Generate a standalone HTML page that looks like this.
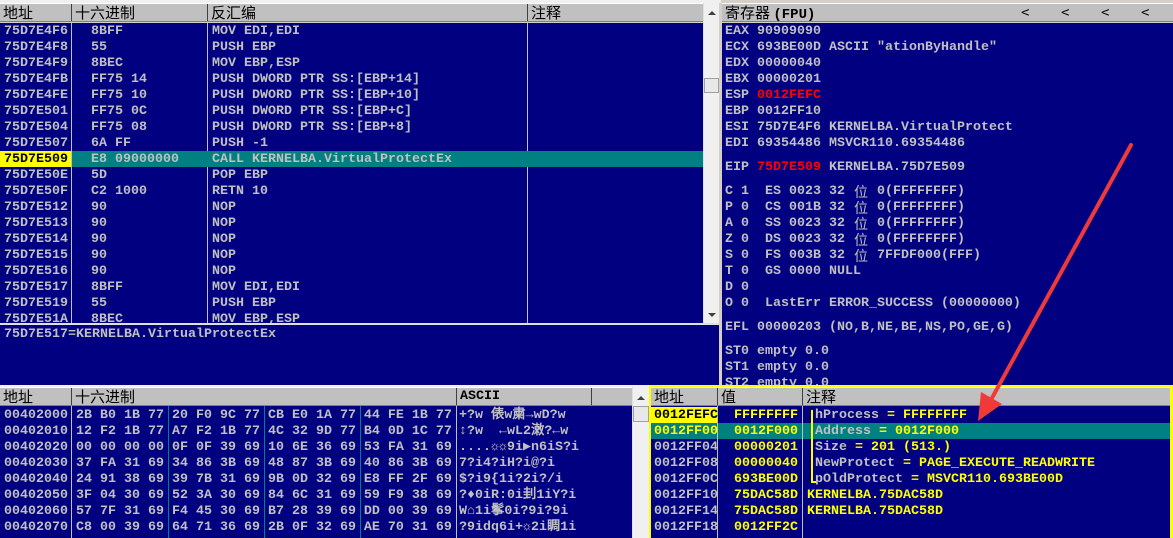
<!DOCTYPE html>
<html><head><meta charset="utf-8"><style>
*{margin:0;padding:0;box-sizing:border-box}
body{width:1173px;height:538px;overflow:hidden;background:#d4d0c8;position:relative;font-family:"Liberation Mono",monospace;font-weight:bold;font-size:13.33px;color:#c0c0c0}
.a{position:absolute}
.blue{background:#000080}
.hdr{position:absolute;background:#c0c0c0;border-top:1px solid #fff;border-bottom:1px solid #808080;height:19px;font-family:"Noto Sans CJK SC","WenQuanYi Zen Hei",sans-serif;font-weight:normal;font-size:15px;color:#000;line-height:18px;white-space:pre;overflow:hidden}
.hdr span{position:absolute;top:0;height:18px;border-right:1px solid #404040;padding-left:3px}
.r{position:absolute;height:16px;line-height:16px;white-space:pre}
.t{position:absolute;white-space:pre}
.vl{position:absolute;width:1px;background:#c0c0c0}
.sb{position:absolute;background:#f0f0f0;border-left:1px solid #e0e0e0}
.y{color:#ffff00}.rd{color:#ff0000}
.w{display:inline-block;width:16px;height:16px;line-height:16px;vertical-align:top;font-family:"Noto Sans CJK SC",sans-serif;font-weight:normal;font-size:14px;text-align:center;overflow:hidden}
</style></head><body>
<!-- Disassembly pane -->
<div class="a" style="left:0;top:0;width:721px;height:3px;background:#f0f0f0"></div>
<div class="hdr" style="left:0;top:3px;width:703px">
<span style="left:0;width:72px">地址</span><span style="left:72px;width:136px">十六进制</span><span style="left:208px;width:320px">反汇编</span><span style="left:528px;width:175px;border-right:none">注释</span></div>
<div class="a blue" style="left:0;top:23px;width:703px;height:300px;overflow:hidden">
<div class="vl" style="left:71px;top:0;height:300px"></div>
<div class="vl" style="left:207px;top:0;height:300px"></div>
<div class="vl" style="left:527px;top:0;height:300px"></div>
<div class="r" style="top:128px;left:72px;width:631px;background:#008080"></div>
<div class="r" style="top:128px;left:0;width:71px;background:#ffff00"></div>
<div class="t" style="left:4px;top:1px;line-height:16px">75D7E4F6
75D7E4F8
75D7E4F9
75D7E4FB
75D7E4FE
75D7E501
75D7E504
75D7E507
<span style="color:#000">75D7E509</span>
75D7E50E
75D7E50F
75D7E512
75D7E513
75D7E514
75D7E515
75D7E516
75D7E517
75D7E519
75D7E51A</div>
<div class="t" style="left:91px;top:1px;line-height:16px">8BFF
55
8BEC
FF75 14
FF75 10
FF75 0C
FF75 08
6A FF
E8 09000000
5D
C2 1000
90
90
90
90
90
8BFF
55
8BEC</div>
<div class="t" style="left:212px;top:1px;line-height:16px">MOV EDI,EDI
PUSH EBP
MOV EBP,ESP
PUSH DWORD PTR SS:[EBP+14]
PUSH DWORD PTR SS:[EBP+10]
PUSH DWORD PTR SS:[EBP+C]
PUSH DWORD PTR SS:[EBP+8]
PUSH -1
CALL KERNELBA.VirtualProtectEx
POP EBP
RETN 10
NOP
NOP
NOP
NOP
NOP
MOV EDI,EDI
PUSH EBP
MOV EBP,ESP</div>
</div>
<div class="sb" style="left:703px;top:3px;width:16px;height:320px">
<div class="a" style="left:4px;top:8px;width:0;height:0;border-left:4px solid transparent;border-right:4px solid transparent;border-bottom:4px solid #404040"></div>
<div class="a" style="left:0;top:75px;width:15px;height:15px;background:#e8e8e8;border:1px solid #a0a0a0"></div>
<div class="a" style="left:4px;top:310px;width:0;height:0;border-left:4px solid transparent;border-right:4px solid transparent;border-top:4px solid #404040"></div>
</div>
<div class="a" style="left:0;top:323px;width:719px;height:2px;background:#e0e0e0"></div>
<div class="a blue" style="left:0;top:325px;width:719px;height:60px"><div class="t" style="left:4px;top:2px;line-height:16px">75D7E517=KERNELBA.VirtualProtectEx</div></div>

<!-- Registers -->
<div class="hdr" style="left:722px;top:3px;width:451px"><span style="left:0;width:451px;border-right:none">寄存器 <b style="font-family:'Liberation Mono',monospace;font-size:14px">(FPU)</b></span>
<span style="left:296px;border:none">&lt;</span><span style="left:336px;border:none">&lt;</span><span style="left:376px;border:none">&lt;</span><span style="left:416px;border:none">&lt;</span></div>
<div class="a blue" style="left:722px;top:23px;width:451px;height:363px;overflow:hidden">
<div class="t" style="left:3px;top:1px;line-height:16px">EAX 90909090
ECX 693BE00D ASCII "ationByHandle"
EDX 00000040
EBX 00000201
ESP <span class="rd">0012FEFC</span>
EBP 0012FF10
ESI 75D7E4F6 KERNELBA.VirtualProtect
EDI 69354486 MSVCR110.69354486</div>
<div class="t" style="left:3px;top:137px;line-height:16px">EIP <span class="rd">75D7E509</span> KERNELBA.75D7E509</div>
<div class="t" style="left:3px;top:161px;line-height:16px">C 1  ES 0023 32 <span class="w">位</span> 0(FFFFFFFF)
P 0  CS 001B 32 <span class="w">位</span> 0(FFFFFFFF)
A 0  SS 0023 32 <span class="w">位</span> 0(FFFFFFFF)
Z 0  DS 0023 32 <span class="w">位</span> 0(FFFFFFFF)
S 0  FS 003B 32 <span class="w">位</span> 7FFDF000(FFF)
T 0  GS 0000 NULL
D 0
O 0  LastErr ERROR_SUCCESS (00000000)</div>
<div class="t" style="left:3px;top:297px;line-height:16px">EFL 00000203 (NO,B,NE,BE,NS,PO,GE,G)</div>
<div class="t" style="left:3px;top:321px;line-height:16px">ST0 empty 0.0
ST1 empty 0.0
ST2 empty 0.0</div>
</div>

<!-- Dump -->
<div class="a" style="left:0;top:385px;width:650px;height:2px;background:#f0f0f0"></div>
<div class="hdr" style="left:0;top:387px;width:632px">
<span style="left:0;width:72px">地址</span><span style="left:72px;width:385px">十六进制</span><span style="left:457px;width:135px;font-family:'Liberation Mono',monospace;font-weight:bold;font-size:13.33px">ASCII</span></div>
<div class="a blue" style="left:0;top:406px;width:632px;height:132px;overflow:hidden">
<div class="vl" style="left:71px;top:0;height:132px"></div>
<div class="vl" style="left:168px;top:0;height:132px;background:#008080"></div>
<div class="vl" style="left:264px;top:0;height:132px;background:#008080"></div>
<div class="vl" style="left:360px;top:0;height:132px;background:#008080"></div>
<div class="vl" style="left:456px;top:0;height:132px"></div>
<div class="t" style="left:4px;top:2px;line-height:16px">00402000
00402010
00402020
00402030
00402040
00402050
00402060
00402070</div>
<div class="t" style="left:76px;top:2px;line-height:16px">2B B0 1B 77 20 F0 9C 77 CB E0 1A 77 44 FE 1B 77
12 F2 1B 77 A7 F2 1B 77 4C 32 9D 77 B4 0D 1C 77
00 00 00 00 0F 0F 39 69 10 6E 36 69 53 FA 31 69
37 FA 31 69 34 86 3B 69 48 87 3B 69 40 86 3B 69
24 91 38 69 39 7B 31 69 9B 0D 32 69 E8 FF 2F 69
3F 04 30 69 52 3A 30 69 84 6C 31 69 59 F9 38 69
57 7F 31 69 F4 45 30 69 B7 28 39 69 DD 00 39 69
C8 00 39 69 64 71 36 69 2B 0F 32 69 AE 70 31 69</div>
<div class="t" style="left:459px;top:2px;line-height:16px">+?w 俵w粛→wD?w
↕?w  ←wL2潄?←w
....☼☼9i▶n6iS?i
7?i4?iH?i@?i
$?i9{1i?2i?/i
?♦0iR:0i刲1iY?i
W⌂1i鬇0i?9i?9i
?9idq6i+☼2i睭1i</div>
</div>
<div class="sb" style="left:632px;top:387px;width:17px;height:151px">
<div class="a" style="left:4px;top:9px;width:0;height:0;border-left:4px solid transparent;border-right:4px solid transparent;border-bottom:4px solid #404040"></div>
<div class="a" style="left:0;top:19px;width:16px;height:16px;background:#e8e8e8;border:1px solid #a0a0a0"></div>
</div>

<!-- Stack -->
<div class="a" style="left:649px;top:385px;width:524px;height:153px;background:#ffff00"></div>
<div class="hdr" style="left:651px;top:387px;width:519px">
<span style="left:0;width:67px">地址</span><span style="left:67px;width:85px">值</span><span style="left:152px;width:367px;border-right:none">注释</span></div>
<div class="a blue" style="left:651px;top:406px;width:519px;height:132px;overflow:hidden">
<div class="vl" style="left:66px;top:0;height:132px"></div>
<div class="vl" style="left:151px;top:0;height:132px"></div>
<div class="r" style="top:1px;left:0;width:66px;background:#ffff00"></div>
<div class="r" style="top:17px;left:0;width:66px;background:#008080"></div>
<div class="r" style="top:17px;left:67px;width:84px;background:#008080"></div>
<div class="r" style="top:17px;left:152px;width:367px;background:#008080"></div>
<div class="t" style="left:3px;top:2px;line-height:16px"><span style="color:#000">0012FEFC</span>
<span class="y">0012FF00</span>
0012FF04
0012FF08
0012FF0C
0012FF10
0012FF14
0012FF18</div>
<div class="t y" style="left:83px;top:2px;line-height:16px">FFFFFFFF
0012F000
00000201
00000040
693BE00D
75DAC58D
75DAC58D
0012FF2C</div>
<div class="a" style="left:160px;top:4px;width:2px;height:73px;background:#ffff00"></div>
<div class="a" style="left:160px;top:75px;width:6px;height:2px;background:#ffff00"></div>
<div class="t" style="left:164px;top:2px;line-height:16px">hProcess <span class="y">= FFFFFFFF</span>
Address <span class="y">= 0012F000</span>
Size <span class="y">= 201 (513.)</span>
NewProtect <span class="y">= PAGE_EXECUTE_READWRITE</span>
pOldProtect <span class="y">= MSVCR110.693BE00D</span></div>
<div class="t y" style="left:156px;top:82px;line-height:16px">KERNELBA.75DAC58D
KERNELBA.75DAC58D</div>
</div>

<!-- Red arrow -->
<svg class="a" style="left:0;top:0" width="1173" height="538">
<line x1="1131" y1="145" x2="992" y2="398" stroke="#f03a3a" stroke-width="4" stroke-linecap="round"/>
<polygon points="978,421 981,392 1002,404" fill="#f03a3a"/>
</svg>
</body></html>
